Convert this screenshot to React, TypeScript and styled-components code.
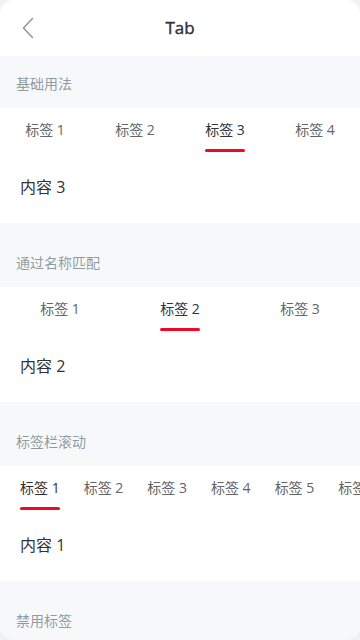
import React, { useState } from 'react';
import styled, { createGlobalStyle, css } from 'styled-components';

const GlobalStyle = createGlobalStyle`
  * { box-sizing: border-box; }
  html, body {
    margin: 0;
    padding: 0;
    background: #f0f1f3;
    font-family: "Open Sans", "Noto Sans", "Noto Sans CJK SC", sans-serif;
    -webkit-font-smoothing: antialiased;
  }
`;

const COLORS = {
  bg: '#f7f8fa',
  white: '#ffffff',
  title: '#323233',
  text: '#646566',
  gray: '#969799',
  blockTitle: 'rgba(69, 90, 100, 0.6)',
  red: '#ee0a24',
};

type TabDemo = {
  id: string;
  title: string;
  tabs: string[];
  active: number;
  scrollable?: boolean;
};

const DEMOS: TabDemo[] = [
  { id: 'basic', title: '基础用法', tabs: ['标签 1', '标签 2', '标签 3', '标签 4'], active: 2 },
  { id: 'name', title: '通过名称匹配', tabs: ['标签 1', '标签 2', '标签 3'], active: 1 },
  {
    id: 'scroll',
    title: '标签栏滚动',
    tabs: ['标签 1', '标签 2', '标签 3', '标签 4', '标签 5', '标签 6', '标签 7', '标签 8'],
    active: 0,
    scrollable: true,
  },
];

const BackIcon = () => (
  <svg width="12" height="22" viewBox="0 0 12 22" fill="none">
    <path d="M10.5 1.5L1.5 11l9 9.5" stroke={COLORS.gray} strokeWidth="1.6" strokeLinecap="round" strokeLinejoin="round" />
  </svg>
);

const DemoTabs = ({ demo }: { demo: TabDemo }) => {
  const [active, setActive] = useState(demo.active);
  return (
    <>
      <TabsWrap>
        <TabsNav $scrollable={demo.scrollable}>
          {demo.tabs.map((tab, i) => (
            <TabItem key={tab} $active={i === active} $scrollable={demo.scrollable} onClick={() => setActive(i)}>
              <TabText>{tab}</TabText>
              {i === active && <TabLine />}
            </TabItem>
          ))}
        </TabsNav>
      </TabsWrap>
      <Panel>内容 {active + 1}</Panel>
    </>
  );
};

const App = (): React.JSX.Element => {
  return (
    <>
      <GlobalStyle />
      <Screen>
        <NavBar>
          <BackButton>
            <BackIcon />
          </BackButton>
          <NavTitle>Tab</NavTitle>
        </NavBar>

        {DEMOS.map((demo, i) => (
          <DemoBlock key={demo.id}>
            <BlockTitle $first={i === 0}>{demo.title}</BlockTitle>
            <DemoTabs demo={demo} />
          </DemoBlock>
        ))}

        <DemoBlock>
          <BlockTitle>禁用标签</BlockTitle>
        </DemoBlock>
      </Screen>
    </>
  );
};

const Screen = styled.div`
  width: 360px;
  height: 640px;
  overflow: hidden;
  background: ${COLORS.bg};
  border-radius: 14px;
`;

const NavBar = styled.div`
  position: relative;
  height: 56px;
  display: flex;
  align-items: center;
  justify-content: center;
  background: ${COLORS.white};
`;

const BackButton = styled.div`
  position: absolute;
  left: 22px;
  top: 17px;
  display: flex;
`;

const NavTitle = styled.h1`
  margin: 0;
  font-size: 17px;
  font-weight: 400;
  -webkit-text-stroke: 0.4px ${COLORS.title};
  color: ${COLORS.title};
  line-height: 24px;
`;

const DemoBlock = styled.div`
  display: flex;
  flex-direction: column;
`;

const BlockTitle = styled.h2<{ $first?: boolean }>`
  margin: 0;
  padding: ${({ $first }) => ($first ? '20px' : '32px')} 16px 16px;
  font-size: 14px;
  font-weight: 400;
  line-height: 16px;
  color: ${COLORS.blockTitle};
`;

const TabsWrap = styled.div`
  height: 44px;
  overflow: hidden;
  background: ${COLORS.white};
`;

const TabsNav = styled.div<{ $scrollable?: boolean }>`
  display: flex;
  height: 44px;
  ${({ $scrollable }) =>
    $scrollable &&
    css`
      padding: 0 8px;
      width: max-content;
    `}
`;

const TabItem = styled.div<{ $active: boolean; $scrollable?: boolean }>`
  position: relative;
  display: flex;
  align-items: center;
  justify-content: center;
  font-size: 14px;
  line-height: 20px;
  cursor: pointer;
  color: ${({ $active }) => ($active ? COLORS.title : COLORS.text)};
  ${({ $scrollable }) =>
    $scrollable
      ? css`
          flex: 0 0 auto;
          padding: 0 12px;
        `
      : css`
          flex: 1;
        `}
`;

const TabText = styled.span`
  white-space: nowrap;
`;

const TabLine = styled.div`
  position: absolute;
  left: 50%;
  bottom: 0;
  width: 40px;
  height: 3px;
  margin-left: -20px;
  border-radius: 3px;
  background: ${COLORS.red};
`;

const Panel = styled.div`
  padding: 24px 20px;
  font-size: 16px;
  line-height: 23px;
  color: ${COLORS.title};
  background: ${COLORS.white};
`;

export default App;
